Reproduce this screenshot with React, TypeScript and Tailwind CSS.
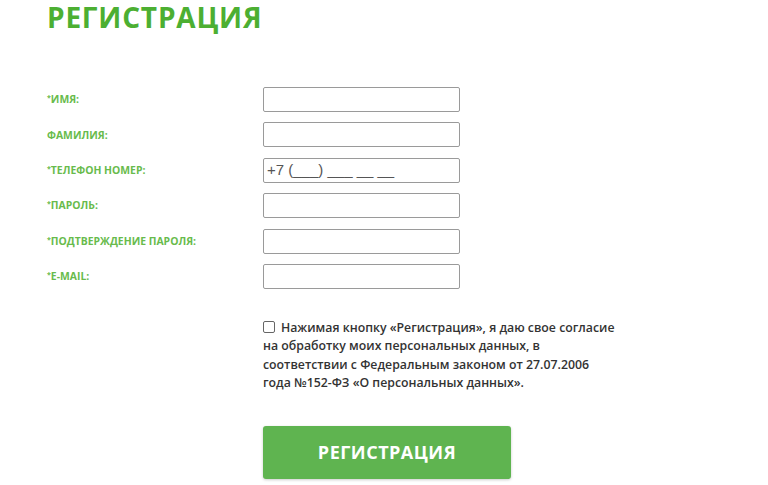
import React from "react";

const fields = [
  { label: "ИМЯ:", req: true, value: "" },
  { label: "ФАМИЛИЯ:", req: false, value: "" },
  { label: "ТЕЛЕФОН НОМЕР:", req: true, value: "+7 (___) ___ __ __" },
  { label: "ПАРОЛЬ:", req: true, value: "" },
  { label: "ПОДТВЕРЖДЕНИЕ ПАРОЛЯ:", req: true, value: "" },
  { label: "E-MAIL:", req: true, value: "" },
];

export default function App() {
  return (
    <div
      className="w-[768px] h-[485px] bg-white overflow-hidden pl-[47px]"
      style={{ fontFamily: '"Open Sans", "Noto Sans", sans-serif' }}
    >
      <h1 className="text-[28px] font-bold leading-[34px] text-[#4caf32] tracking-[0.8px] h-[34px]">
        РЕГИСТРАЦИЯ
      </h1>
      <div className="mt-[53px] flex flex-col gap-[10.4px]">
        {fields.map((f) => (
          <div key={f.label} className="flex items-center h-[25px]">
            <div className="w-[216px] text-[10.4px] font-bold text-[#68bb4c] leading-none">
              {f.req ? <span className="text-[7px] align-top">*</span> : null}
              {f.label}
            </div>
            <div className="w-[197px] h-[25px] border border-[#9a9a9a] rounded-[2px] flex items-center px-[3px] text-[15px] text-[#555]" style={{ fontFamily: '"Liberation Sans", Arial, sans-serif' }}>
              {f.value}
            </div>
          </div>
        ))}
      </div>
      <div className="ml-[216px] mt-[30px] text-[12.3px] font-semibold text-[#333] leading-[18.5px] whitespace-nowrap">
        <span className="inline-block w-[12px] h-[12px] border border-[#666] rounded-[2px] align-[-1px] mr-[6px]"></span>
        Нажимая кнопку «Регистрация», я даю свое согласие
        <br />
        на обработку моих персональных данных, в
        <br />
        соответствии с Федеральным законом от 27.07.2006
        <br />
        года №152-ФЗ «О персональных данных».
      </div>
      <button className="ml-[216px] mt-[33px] w-[248px] h-[53px] rounded-[3px] bg-[#5fb450] text-white text-[18px] font-bold tracking-[0.5px] shadow-[0_1px_3px_rgba(0,0,0,0.2)]">
        РЕГИСТРАЦИЯ
      </button>
    </div>
  );
}
